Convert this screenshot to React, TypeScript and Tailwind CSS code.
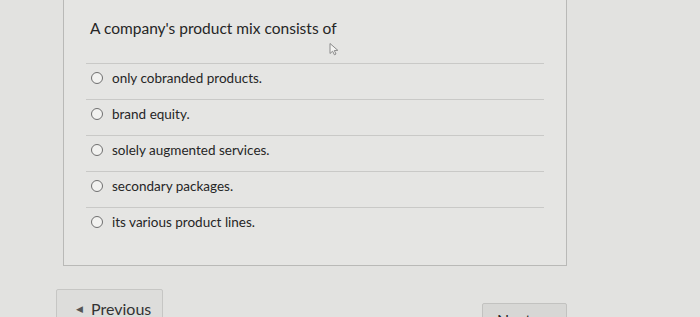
const OPTIONS = [
  'only cobranded products.',
  'brand equity.',
  'solely augmented services.',
  'secondary packages.',
  'its various product lines.',
];

const CursorIcon = () => (
  <svg width="12" height="14" viewBox="0 0 12 14" fill="none">
    <path
      d="M2 1.5 L2 11.5 L4.6 9.2 L6.4 12.8 L8 12 L6.3 8.5 L9.8 8.3 Z"
      stroke="#8a8a8a"
      strokeWidth="1"
      strokeLinejoin="round"
      fill="#f4f4f2"
    />
  </svg>
);

const App = () => {
  return (
    <div className="w-[700px] h-[317px] overflow-hidden bg-[#e2e2e0] font-['Lato','Liberation_Sans',sans-serif] text-[#262626]">
      {/* question panel */}
      <div className="ml-[63px] w-[504px] h-[266px] border-x border-b border-[#b9b9b7] bg-[#e5e5e3] pl-[22px] pr-[22px]">
        <div className="h-[63px] pt-[17px] relative">
          <p className="text-[15.5px] leading-[22px] pl-[4px]">A company's product mix consists of</p>
          <div className="absolute left-[242px] top-[42px]">
            <CursorIcon />
          </div>
        </div>
        {OPTIONS.map((label) => (
          <div key={label} className="h-[36px] border-t border-[#c9c9c7] pt-[5px]">
            <label className="flex items-center gap-[9px] pl-[5px] text-[13.5px] leading-[18px]">
              <span className="w-[12px] h-[12px] rounded-full border-[1.5px] border-[#6f6f6f] bg-[#f2f2f0]" />
              <span>{label}</span>
            </label>
          </div>
        ))}
      </div>

      {/* nav buttons */}
      <div className="flex justify-between items-start ml-[56px] w-[511px] mt-[23px]">
        <button className="flex items-center gap-[8px] w-[107px] h-[40px] pl-[19px] border border-[#c6c6c4] rounded-[2px] bg-[#dddddb] text-[16px] text-[#333]">
          <span className="text-[9px] text-[#555]">◀</span>
          <span>Previous</span>
        </button>
        <button className="mt-[14px] w-[85px] h-[30px] pl-[14px] pt-[4px] text-left border border-[#c2c2c0] rounded-[2px] bg-[#d7d7d5] text-[16px] text-[#222] leading-[22px]">
          Next
        </button>
      </div>
    </div>
  );
};

export default App;
